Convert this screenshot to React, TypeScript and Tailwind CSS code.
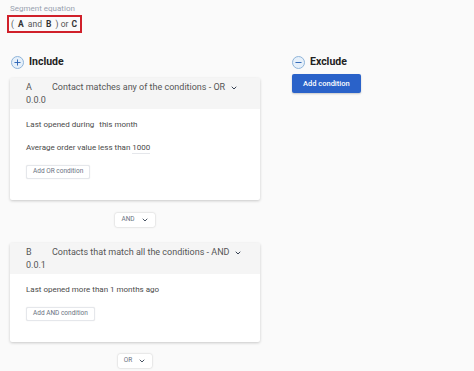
import { ChevronDown, Plus, Minus } from 'lucide-react';

interface Group {
  letter: string;
  title: string;
  code: string;
  rows: React.ReactNode[];
  addLabel: string;
}

const groups: Group[] = [
  {
    letter: 'A',
    title: 'Contact matches any of the conditions - OR',
    code: '0.0.0',
    rows: [
      <>Last opened during <span className="ml-[3px]">this month</span></>,
      <>Average order value less than <span className="border-b border-gray-200 pb-[1px]">1000</span></>,
    ],
    addLabel: 'Add OR condition',
  },
  {
    letter: 'B',
    title: 'Contacts that match all the conditions - AND',
    code: '0.0.1',
    rows: [<>Last opened more than 1 months ago</>],
    addLabel: 'Add AND condition',
  },
];

function Joiner({ label }: { label: string }) {
  return (
    <div className="flex justify-center w-[250px]">
      <div className="flex items-center gap-[6px] h-[14px] px-[6px] bg-white rounded-[2px] shadow-[0_0_2px_rgba(0,0,0,0.25)] text-[6.5px] text-gray-500">
        {label}
        <ChevronDown className="w-[8px] h-[8px] text-gray-600" strokeWidth={3} />
      </div>
    </div>
  );
}

function GroupCard({ g }: { g: Group }) {
  return (
    <div className="w-[250px] bg-white rounded-[2px] shadow-[0_1px_3px_rgba(0,0,0,0.2)]">
      <div className="bg-[#f5f5f5] px-[16px] pt-[3px] pb-[2px] text-[9px] text-[#555] leading-[13px] whitespace-nowrap">
        <div className="flex items-center">
          <span className="w-[26px]">{g.letter}</span>
          <span>{g.title}</span>
          <ChevronDown className="ml-[5px] w-[8px] h-[8px] text-gray-700" strokeWidth={3} />
        </div>
        <div>{g.code}</div>
      </div>
      <div className="px-[16px] pt-[10px] pb-[21px] text-[8px] text-[#4a4a4a]">
        {g.rows.map((r, i) => (
          <div key={i} className="h-[12px] mb-[11px] leading-[12px]">{r}</div>
        ))}
        <button
          type="button"
          className="block h-[14px] px-[6px] bg-white rounded-[2px] border border-gray-200 shadow-[0_0_1px_rgba(0,0,0,0.15)] text-[6.5px] text-gray-500"
        >
          {g.addLabel}
        </button>
      </div>
    </div>
  );
}

export default function App() {
  return (
    <div className="w-[474px] h-[371px] overflow-hidden bg-[#fafafa] font-['Roboto',sans-serif]">
      <div className="pl-[10px] pt-[4px]">
        <p className="text-[8px] text-gray-400 leading-[10px]">Segment equation</p>
      </div>
      <div className="ml-[7px] mt-[1px] flex w-fit items-center h-[18px] px-[2px] border-2 border-[#d0202a] text-[8.5px] text-[#555] whitespace-pre">
        ( <b className="mx-[2px] text-[#333]">A</b> and <b className="mx-[2px] text-[#333]">B</b> ) or <b className="ml-[1px] mr-[1px] text-[#333]">C</b>
      </div>

      <div className="flex mt-[22px]">
        <div className="pl-[10px] w-[282px]">
          <div className="flex items-center h-[14px] ml-[1px]">
            <span className="flex items-center justify-center w-[13px] h-[13px] rounded-full border border-[#8fb4d9] bg-[#e6f0fa]">
              <Plus className="w-[9px] h-[9px] text-[#2b64b5]" strokeWidth={2.5} />
            </span>
            <span className="ml-[5px] text-[10.5px] font-bold text-[#222]">Include</span>
          </div>
          <div className="mt-[9px]">
            <GroupCard g={groups[0]} />
          </div>
          <div className="mt-[13px]">
            <Joiner label="AND" />
          </div>
          <div className="mt-[16px]">
            <GroupCard g={groups[1]} />
          </div>
          <div className="mt-[12px]">
            <Joiner label="OR" />
          </div>
        </div>

        <div className="pl-[10px]">
          <div className="flex items-center h-[14px]">
            <span className="flex items-center justify-center w-[13px] h-[13px] rounded-full border border-[#8fb4d9] bg-[#e6f0fa]">
              <Minus className="w-[9px] h-[9px] text-[#2b64b5]" strokeWidth={2.5} />
            </span>
            <span className="ml-[5px] text-[10.5px] font-bold text-[#222]">Exclude</span>
          </div>
          <button
            type="button"
            className="mt-[3px] h-[19px] px-[11px] bg-[#2a62c9] rounded-[2px] text-[7.5px] font-medium text-white shadow-[0_1px_2px_rgba(0,0,0,0.2)]"
          >
            Add condition
          </button>
        </div>
      </div>
    </div>
  );
}
